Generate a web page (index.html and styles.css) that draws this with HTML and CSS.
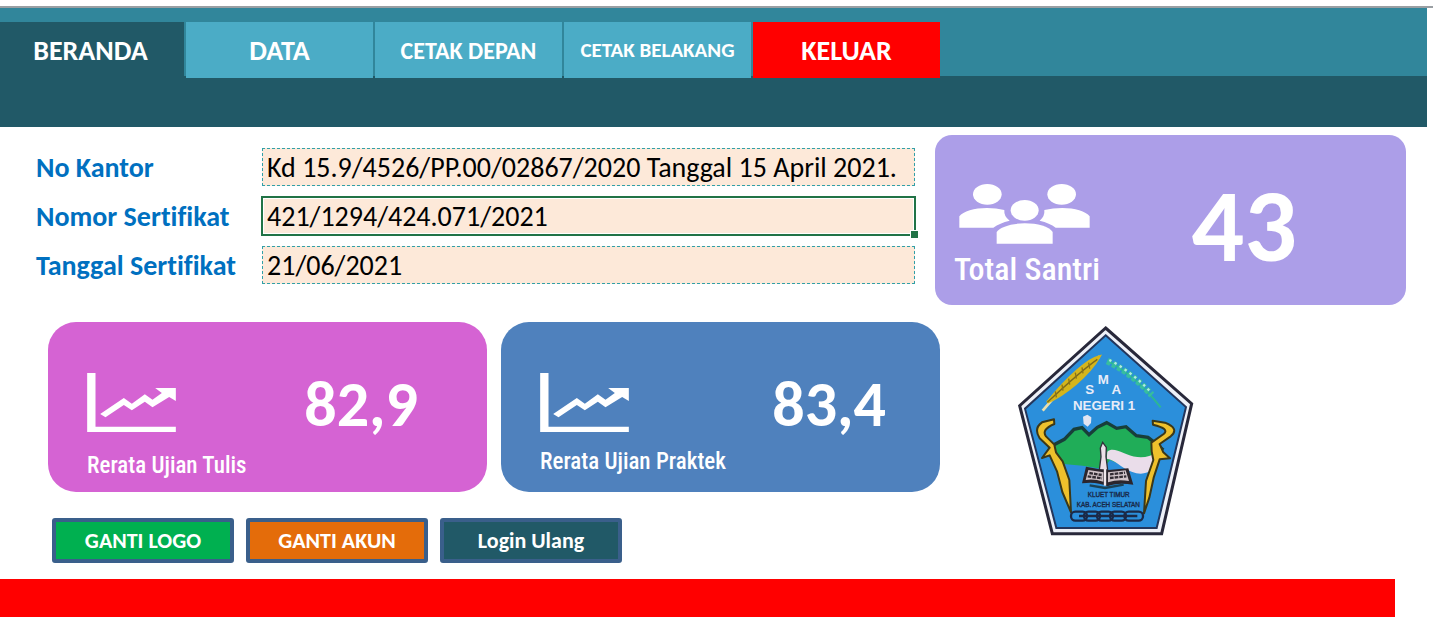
FILE: index.html
```html
<!DOCTYPE html>
<html lang="id">
<head>
<meta charset="utf-8">
<title>Beranda</title>
<link rel="stylesheet" href="styles.css">
</head>
<body>
<header class="header">
  <nav class="tabs">
    <a class="tab tab-active" href="#beranda">BERANDA</a>
    <a class="tab" href="#data">DATA</a>
    <a class="tab tab-medium" href="#depan">CETAK DEPAN</a>
    <a class="tab tab-small" href="#belakang">CETAK BELAKANG</a>
    <a class="tab tab-exit" href="#keluar">KELUAR</a>
  </nav>
</header>
<main>
  <section class="top">
    <form class="form">
      <label class="label" for="kantor">No Kantor</label>
      <div class="cell"><input class="field" id="kantor" type="text" value="Kd 15.9/4526/PP.00/02867/2020 Tanggal 15 April 2021."></div>
      <label class="label" for="nomor">Nomor Sertifikat</label>
      <div class="cell cell-selected"><input class="field" id="nomor" type="text" value="421/1294/424.071/2021"></div>
      <label class="label" for="tanggal">Tanggal Sertifikat</label>
      <div class="cell"><input class="field" id="tanggal" type="text" value="21/06/2021"></div>
    </form>
    <article class="card card-total">
      <div class="card-info">
        <svg class="people" viewBox="0 0 393 180" fill="#fff" aria-hidden="true">
          <ellipse cx="85" cy="31" rx="43" ry="31"/>
          <ellipse cx="308" cy="31" rx="43" ry="31"/>
          <ellipse cx="197" cy="79" rx="42" ry="31"/>
          <path d="M1 131V97C12 82 46 72 84 72Q112 72 136 78Q134 97 152 110Q122 117 103 131Z"/>
          <path d="M392 131V97C381 82 347 72 310 72Q282 72 256 78Q258 97 242 110Q272 117 290 131Z"/>
          <path d="M113 179V144C124 128 158 118 197 118S270 128 281 144V179Z"/>
        </svg>
        <h2 class="card-title">Total Santri</h2>
      </div>
      <p class="number">43</p>
    </article>
  </section>
  <section class="bottom">
    <div class="left">
      <div class="scores">
        <article class="card card-tulis">
          <div class="card-info">
            <svg class="chart" viewBox="0 0 266 177" fill="#fff" aria-hidden="true">
              <path d="M0 0H25V161H266V177H0Z"/>
              <path d="M39 123L110 75L134 92L173 64L196 80L224 60L204 45H266V84L246 72L196 103L173 86L134 112L110 96L55 133Z"/>
            </svg>
            <h2 class="card-title">Rerata Ujian Tulis</h2>
          </div>
          <p class="number">82,9</p>
        </article>
        <article class="card card-praktek">
          <div class="card-info">
            <svg class="chart" viewBox="0 0 266 177" fill="#fff" aria-hidden="true">
              <path d="M0 0H25V161H266V177H0Z"/>
              <path d="M39 123L110 75L134 92L173 64L196 80L224 60L204 45H266V84L246 72L196 103L173 86L134 112L110 96L55 133Z"/>
            </svg>
            <h2 class="card-title">Rerata Ujian Praktek</h2>
          </div>
          <p class="number">83,4</p>
        </article>
      </div>
      <div class="actions">
        <button class="action action-logo" type="button">GANTI LOGO</button>
        <button class="action action-akun" type="button">GANTI AKUN</button>
        <button class="action action-login" type="button">Login Ulang</button>
      </div>
    </div>
    <svg class="crest" viewBox="0 6 570 654" role="img" aria-label="SMA Negeri 1 Kluet Timur">
      <path d="M287 24L545 251L455 641H127L29 257Z" fill="#eef1f8" stroke="#28283a" stroke-width="9"/>
      <path d="M287 46L528 261L440 624H139L45 266Z" fill="#2b8fdb" stroke="#23365c" stroke-width="6"/>
      <!-- rice and cotton sprigs -->
      <path d="M268 110C220 145 165 190 98 272" fill="none" stroke="#e9dfae" stroke-width="8"/>
      <path d="M268 110C236 118 178 166 112 247C166 222 236 166 268 110Z" fill="#d5b51b" stroke="#d5b51b" stroke-width="8"/>
      <path d="M262 118C218 149 178 185 112 247" fill="none" stroke="#7c6a1c" stroke-width="4"/>
      <path d="M236 128l3 18M216 142l3 18M196 158l3 18M176 176l3 18M156 194l3 18M136 214l3 18" stroke="#8c7417" stroke-width="4"/>
      <path d="M292 122C340 148 395 190 452 262" fill="none" stroke="#2bb695" stroke-width="6"/>
      <path d="M292 123C340 148 385 180 425 225" fill="none" stroke="#37bda0" stroke-width="20" stroke-dasharray="12 6"/>
      <path d="M298 120C340 142 385 176 418 212" fill="none" stroke="#b5e9e4" stroke-width="7" stroke-dasharray="7 11"/>
      <g class="crest-name">
        <text x="239" y="221">S</text>
        <text x="280" y="192">M</text>
        <text x="319" y="221">A</text>
        <text x="282" y="269">NEGERI 1</text>
      </g>
      <path d="M219 290L232 284L244 292L243 309L233 320L221 311Z" fill="#e2e5f2"/>
      <!-- mountains and river -->
      <path d="M112 403L132 376L163 358L192 328L216 323L237 344L262 322L290 308L320 325L348 320L379 347L414 352L437 370L456 388L432 431L392 460L300 420L279 447L218 437L152 431Z" fill="#20ad58"/>
      <path d="M292 395C313 377 344 408 382 411Q416 414 438 398L428 448Q400 470 365 455C329 441 318 420 290 416Z" fill="#eaddea"/>
      <path d="M116 386L132 374L163 358L192 328L216 323L237 344L262 322L290 308L320 325L348 320L379 347L414 352L437 370L460 390" fill="none" stroke="#183e3a" stroke-width="10"/>
      <!-- rencong daggers -->
      <g fill="#efc12c" stroke="#3c3818" stroke-width="6" stroke-linejoin="round">
        <path d="M132 298L96 307Q70 325 89 355L119 383L96 414L119 406L141 454L157 516L183 577L178 480L158 424L138 397L133 374L108 349Q93 329 133 312Z"/>
        <path d="M428 302L465 308Q510 326 482 349L449 372L460 397L480 415L449 418L431 473L418 533L402 580L408 483L430 420L425 394L424 368L461 342Q480 326 429 314Z"/>
      </g>
      <!-- minaret and open book -->
      <path d="M278 367L271 384L273 410L268 450H293L288 410L289 382Z" fill="#ebe0e8" stroke="#30303a" stroke-width="4"/>
      <path d="M228 440L285 451L355 445L370 494Q321 486 292 499Q260 484 216 490Z" fill="#2b262d"/>
      <path d="M235 450L280 457V485Q252 476 227 480ZM294 457L347 451L357 483Q323 477 294 487Z" fill="#cfc3c8"/>
      <path d="M238 459L275 465M233 469L276 475M300 463L345 458M300 474L349 469" stroke="#322d34" stroke-width="7" stroke-dasharray="11 3"/>
      <path d="M285 447V497" stroke="#f0e8ec" stroke-width="7"/>
      <path d="M239 496L285 504L341 494" fill="none" stroke="#1b4255" stroke-width="7"/>
      <g class="crest-place">
        <text x="296" y="530">KLUET TIMUR</text>
        <text x="295" y="562">KAB. ACEH SELATAN</text>
      </g>
      <g fill="none" stroke="#1b2a48" stroke-width="7">
        <rect x="183" y="575" width="48" height="27" rx="13"/>
        <rect x="222" y="575" width="48" height="27" rx="13"/>
        <rect x="261" y="575" width="48" height="27" rx="13"/>
        <rect x="300" y="575" width="48" height="27" rx="13"/>
        <rect x="343" y="575" width="56" height="27" rx="13"/>
        <path d="M207 588H382"/>
      </g>
    </svg>
  </section>
</main>
<footer class="footer"></footer>
</body>
</html>
```
FILE: styles.css
```css
* { box-sizing: border-box; }

body {
  margin: 0;
  padding-top: 6px;
  background: #fff;
  font-family: Carlito, Lato, sans-serif;
  font-variant-ligatures: none;
}

.header {
  border-top: 2px solid #9a9fa3;
}

.tabs {
  display: flex;
  gap: 2px;
  height: 119px;
  margin-right: 6px;
  padding: 14px 0 49px;
  background: linear-gradient(#31869b 68px, #215967 68px);
}

.tab {
  flex: 0 1 187px;
  display: flex;
  align-items: center;
  justify-content: center;
  background: #4bacc6;
  color: #fff;
  font-size: 28px;
  font-weight: 700;
  text-decoration: none;
  white-space: nowrap;
}

.tab-active { flex-basis: 184px; padding-right: 3px; background: #215967; }
.tab-medium { font-size: 24px; }
.tab-small { font-size: 21px; }
.tab-exit { background: #f00; }

.top {
  display: grid;
  grid-template-columns: 879fr 471fr;
  gap: 20px;
  padding: 8px 27px 0 36px;
}

.form {
  display: grid;
  grid-template-columns: 226px 1fr;
  align-content: start;
  align-items: center;
  row-gap: 11px;
  padding-top: 13px;
}

.label {
  padding-top: 2px;
  color: #0070c0;
  font-size: 28px;
  font-weight: 700;
  line-height: 36px;
}

.cell {
  position: relative;
  height: 38px;
}

.field {
  display: block;
  width: 100%;
  height: 100%;
  padding: 0 4px;
  border: 1px dashed #31a0a8;
  border-radius: 0;
  background: #fde9d9;
  color: #000;
  font: 28px Carlito, Lato, sans-serif;
}

.cell-selected .field {
  border: 1px solid #217346;
  box-shadow: 0 0 0 1px #217346, inset 0 0 0 1px #fff;
}

.cell-selected::after {
  content: "";
  position: absolute;
  right: -3px;
  bottom: -3px;
  width: 7px;
  height: 7px;
  border: solid #fff;
  border-width: 1px 0 0 1px;
  background: #217346;
}

.card {
  display: flex;
  align-items: center;
  justify-content: space-between;
  height: 170px;
  border-radius: 28px;
  color: #fff;
}

.card-info {
  align-self: flex-start;
  display: flex;
  flex-direction: column;
}

.card-title {
  margin: 0;
  font-family: "Roboto Condensed", Roboto, sans-serif;
  font-size: 23px;
  font-weight: 500;
  line-height: 24px;
  white-space: nowrap;
}

.number {
  margin: 0;
  padding-bottom: 6px;
  font-size: 64px;
  font-weight: 700;
  line-height: 1;
}

.card-total {
  padding: 0 109px 0 19px;
  border-radius: 17px;
  background: #ac9ee8;
}

.card-total .card-info { gap: 8px; padding-top: 49px; }
.card-total .card-title { font-size: 32px; line-height: 34px; }
.card-total .number { padding: 12px 0 0; font-size: 104px; }

.card-tulis { padding: 0 69px 0 39px; background: #d563d3; }
.card-tulis .card-info { gap: 22px; padding-top: 51px; }
.card-praktek { padding: 0 54px 0 39px; background: #4f81bd; }
.card-praktek .card-info { gap: 18px; padding-top: 51px; }

.people { width: 131px; height: 60px; margin-left: 5px; }
.chart { width: 89px; height: 59px; }

.bottom {
  display: grid;
  grid-template-columns: 892fr 493fr;
  padding: 17px 0 16px 48px;
}

.scores {
  display: grid;
  grid-template-columns: 1fr 1fr;
  gap: 14px;
}

.actions {
  display: flex;
  gap: 12px;
  padding: 26px 0 0 4px;
}

.action {
  width: 182px;
  height: 45px;
  padding: 0;
  border: 4px solid #3a5f8b;
  border-radius: 3px;
  color: #fff;
  font: 700 22px Carlito, Lato, sans-serif;
}

.action-logo { background: #00b050; }
.action-akun { background: #e46c0a; }
.action-login { background: #215967; }

.crest {
  width: 190px;
  height: 218px;
  margin-left: 70px;
}

.crest text {
  font-family: "Liberation Sans", sans-serif;
  text-anchor: middle;
}

.crest-name { fill: #e8ecf8; font-size: 40px; font-weight: 700; }
.crest-place { fill: #182848; stroke: #182848; font-size: 19px; }

.footer {
  height: 38px;
  margin-right: 38px;
  background: #f00;
}
```
